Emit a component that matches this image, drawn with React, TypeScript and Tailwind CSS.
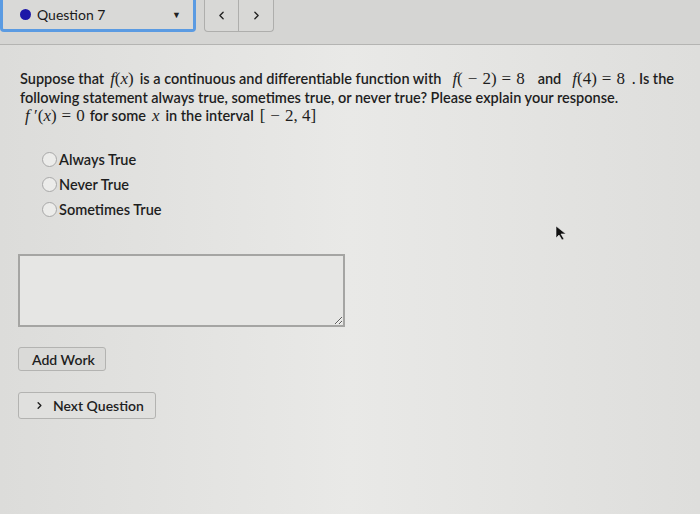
import { ChevronLeft, ChevronRight } from "lucide-react";

const sans = "font-['Lato','Liberation_Sans',sans-serif]";

function M({ children, className = "mx-[6px]" }: { children: React.ReactNode; className?: string }) {
  return <span className={`font-['Liberation_Serif',serif] text-[17px] font-normal ${className}`}>{children}</span>;
}

function I({ children }: { children: React.ReactNode }) {
  return <i className="font-['Liberation_Serif',serif] italic">{children}</i>;
}

// binary operator with MathJax-like spacing
function Op({ children }: { children: React.ReactNode }) {
  return <span className="mx-[5px]">{children}</span>;
}

function Radio({ label }: { label: string }) {
  return (
    <label className="flex items-center gap-[2px] h-[25px]">
      <span className="w-[15px] h-[15px] rounded-full border border-[#a8a8a8] bg-[#ececea]" />
      <span>{label}</span>
    </label>
  );
}

export default function App() {
  const options = ["Always True", "Never True", "Sometimes True"];

  return (
    <div className={`w-[700px] h-[514px] bg-gradient-to-r from-[#dcdcda] via-[#e9e9e7] to-[#dededc] text-[#1e1e1e] ${sans} overflow-hidden flex flex-col`}>
      {/* question picker + prev/next */}
      <div className="h-[45px] bg-[#d5d5d3] border-b border-[#b4b4b2] flex items-start gap-[8px] shrink-0">
        <div className="w-[196px] h-[32px] border-[3px] border-t-0 border-[#5b9be2] rounded-b-[4px] bg-[#d9d9d7] flex items-center pl-[17px] pr-[12px]">
          <span className="w-[11px] h-[11px] rounded-full bg-[#1c17a8]" />
          <span className="ml-[6px] text-[14px] text-[#1a1a1a]">Question 7</span>
          <span className="ml-auto text-[9px] text-[#222]">▼</span>
        </div>
        <div className="flex h-[32px] border border-t-0 border-[#aeaeac] rounded-b-[4px] bg-[#d8d8d6]">
          <button className="w-[34px] flex items-center justify-center border-r border-[#aeaeac]">
            <ChevronLeft className="w-[13px] h-[13px] text-[#222]" strokeWidth={2.5} />
          </button>
          <button className="w-[34px] flex items-center justify-center">
            <ChevronRight className="w-[13px] h-[13px] text-[#222]" strokeWidth={2.5} />
          </button>
        </div>
      </div>

      <div className="pl-[20px] pt-[24px] flex flex-col">
        <p className="text-[14.5px] font-semibold leading-[19px] whitespace-nowrap">
          Suppose that
          <M>
            <I>f</I>(<I>x</I>)
          </M>
          is a continuous and differentiable function with
          <M className="ml-[11px] mr-[13px]">
            <I>f</I>(<Op>−</Op>2)<Op>=</Op>8
          </M>
          and
          <M className="ml-[11px] mr-[7px]">
            <I>f</I>(4)<Op>=</Op>8
          </M>
          . Is the
          <br />
          following statement always true, sometimes true, or never true? Please explain your response.
        </p>
        <p className="ml-[-1px] text-[14.5px] font-semibold leading-[18px] whitespace-nowrap">
          <M className="ml-[6px] mr-[5px]">
            <I>f</I> ′(<I>x</I>)<Op>=</Op>0
          </M>
          for some
          <M>
            <I>x</I>
          </M>
          in the interval
          <M>
            [<Op>−</Op>2, 4]
          </M>
        </p>

        <div className="mt-[22px] ml-[22px] flex flex-col text-[14.5px] font-semibold">
          {options.map((o) => (
            <Radio key={o} label={o} />
          ))}
        </div>

        <textarea className="mt-[32px] -ml-[2px] w-[327px] h-[73px] border-2 border-[#a5a5a3] bg-[#e6e6e4] resize outline-none" />

        <button className="mt-[20px] -ml-[2px] w-[88px] h-[24px] border border-[#b3b3b1] rounded-[3px] bg-[#dadad8] text-[14px] font-semibold text-left pl-[13px]">
          Add Work
        </button>

        <button className="mt-[21px] -ml-[2px] w-[138px] h-[27px] border border-[#b3b3b1] rounded-[3px] bg-[#e0e0de] text-[14px] font-semibold flex items-center pl-[15px] gap-[8px] whitespace-nowrap">
          <ChevronRight className="w-[11px] h-[11px]" strokeWidth={3} />
          Next Question
        </button>
      </div>

      {/* mouse pointer */}
      <svg className="absolute left-[555px] top-[225px]" width="14" height="16" viewBox="0 0 14 16">
        <path d="M1 1 L1 13 L4 10 L7 15 L9 14 L6 9 L11 9 Z" fill="#111" stroke="#eee" strokeWidth="0.6" />
      </svg>
    </div>
  );
}
